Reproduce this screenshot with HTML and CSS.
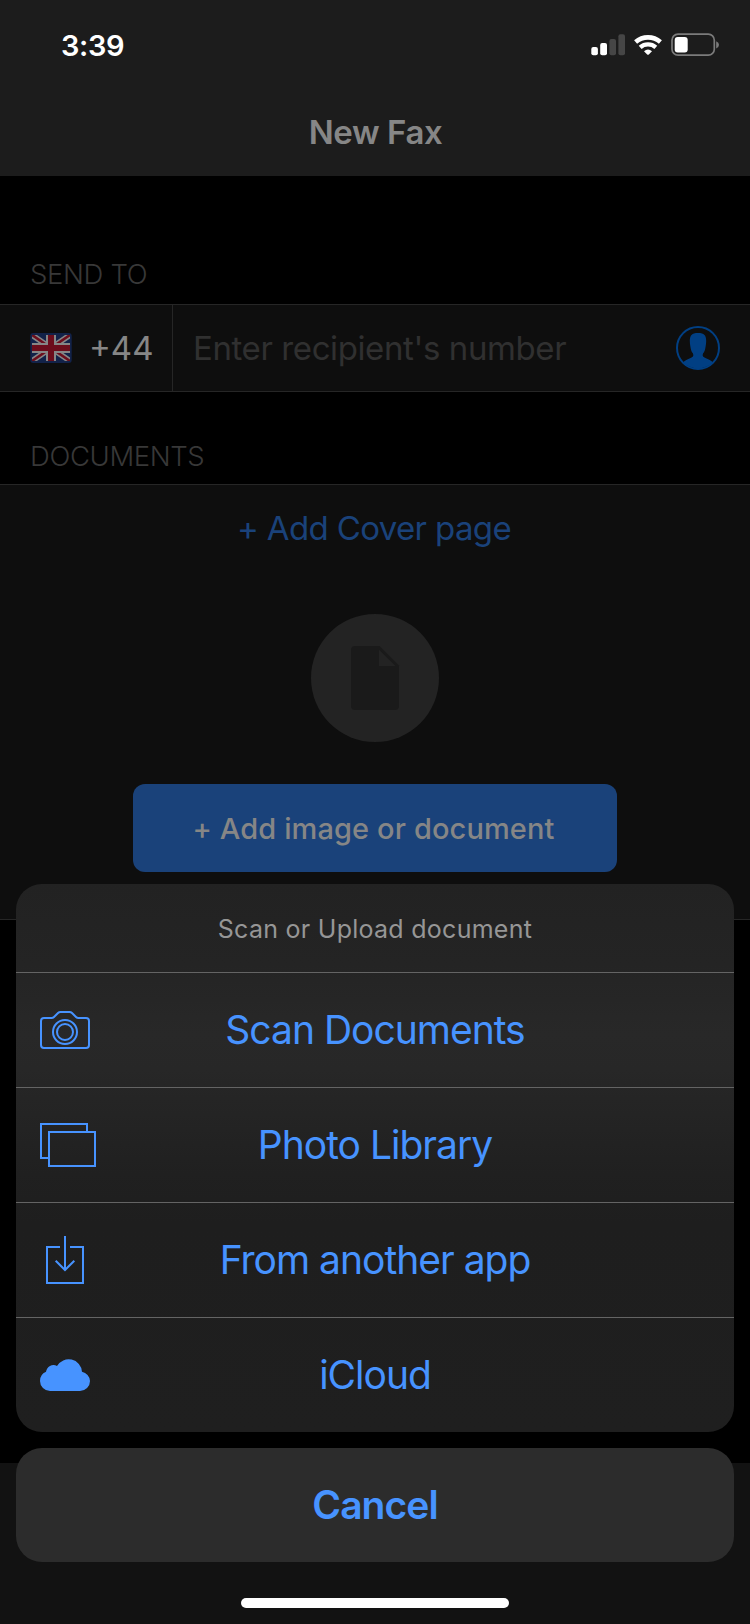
FILE: index.html
```html
<!DOCTYPE html>
<html lang="en">
<head>
<meta charset="utf-8">
<title>New Fax</title>
<link rel="stylesheet" href="styles.css">
</head>
<body>
<div class="screen">
  <header class="header">
    <div class="status">
      <span class="time">3:39</span>
      <svg class="status-icons" width="130" height="26" viewBox="590 32 130 26">
        <g fill="#fff">
          <rect x="591.3" y="47" width="6.6" height="8.3" rx="2"/>
          <rect x="600.2" y="43" width="6.8" height="12.3" rx="2"/>
        </g>
        <g fill="#464646">
          <rect x="609.4" y="39" width="6.6" height="16.3" rx="2"/>
          <rect x="618.4" y="34.2" width="6.6" height="21.1" rx="2"/>
        </g>
        <g fill="none" stroke="#fff">
          <path d="M635.6 42A19 19 0 0 1 660.4 42" stroke-width="4.6"/>
          <path d="M640.2 47.3A11.8 11.8 0 0 1 655.8 47.3" stroke-width="4.3"/>
        </g>
        <path d="M644 51.3A6.2 6.2 0 0 1 652 51.3L648.8 54.5Q648 55.2 647.2 54.5Z" fill="#fff"/>
        <rect x="672" y="34.2" width="42.3" height="21" rx="6" fill="none" stroke="#7b7b7b" stroke-width="1.7"/>
        <rect x="674.7" y="37" width="13" height="15.6" rx="3" fill="#fff"/>
        <path d="M716.2 41.2Q719 42.2 719 44.8T716.2 48.4Z" fill="#7b7b7b"/>
      </svg>
    </div>
    <h1 class="title">New Fax</h1>
  </header>

  <main class="content">
    <h2 class="label send">SEND TO</h2>
    <div class="recipient">
      <div class="country">
        <svg class="flag" width="42" height="30" viewBox="0 0 42 30">
          <rect x=".3" width="41.4" height="30" rx="3" fill="#122249"/>
          <svg x="2" y="2" width="38" height="26" viewBox="0 0 38 26">
            <path d="M0 0L38 26M38 0L0 26" stroke="#868686" stroke-width="5.6"/>
            <path d="M0 0L38 26M38 0L0 26" stroke="#6c0d1c" stroke-width="2.6"/>
            <path d="M19 0V26M0 13H38" stroke="#868686" stroke-width="10"/>
            <path d="M19 0V26M0 13H38" stroke="#6c0d1c" stroke-width="6"/>
          </svg>
        </svg>
        <span class="code">+44</span>
      </div>
      <span class="placeholder">Enter recipient's number</span>
      <svg class="contact" width="44" height="44" viewBox="0 0 44 44">
        <circle cx="22" cy="22" r="21" fill="none" stroke="#013f83" stroke-width="2"/>
        <path d="M7 36.2C9.500 34 13 33 15.500 31.500C17.500 30.500 17.500 29.500 17 27.500C15.200 25.500 14.800 23 14.300 20C13.600 16 13.500 12 15 9.500C16.500 7.500 19 7 22 7S27.500 7.500 29 9.500C30.500 12 30.400 16 29.700 20C29.200 23 28.800 25.500 27 27.500C26.500 29.500 26.500 30.500 28.500 31.500C31 33 34.500 34 37 36.200A21 21 0 0 1 7 36.200Z" fill="#013f83"/>
      </svg>
    </div>
    <h2 class="label docs">DOCUMENTS</h2>
    <section class="documents">
      <a class="cover">+ Add Cover page</a>
      <svg class="empty" width="128" height="128" viewBox="0 0 128 128">
        <circle cx="64" cy="64" r="64" fill="#232323"/>
        <path d="M44 32H68.500L88 51.500V92Q88 96 84 96H44Q40 96 40 92V36Q40 32 44 32Z" fill="#1a1a1a"/>
        <path d="M68 35.800V52H84.500Z" fill="#232323"/>
      </svg>
      <button class="add">+ Add image or document</button>
    </section>
  </main>
  <div class="tabbar"></div>

  <div class="overlay">
    <div class="sheet">
      <div class="sheet-title">Scan or Upload document</div>
      <div class="action">
        <svg width="56" height="48" viewBox="0 0 56 48" fill="none" stroke="#4793ff" stroke-width="2">
          <path d="M4 12H11.500Q13 12 14 11L18 7Q19 6 20.500 6H29.500Q31 6 32 7L36 11Q37 12 38.500 12H46Q49 12 49 15V39Q49 42 46 42H4Q1 42 1 39V15Q1 12 4 12Z"/>
          <circle cx="25" cy="26" r="12"/><circle cx="25" cy="26" r="8"/>
        </svg>
        <span>Scan Documents</span>
      </div>
      <div class="action">
        <svg width="56" height="48" viewBox="0 0 56 48" fill="none" stroke="#4793ff" stroke-width="2">
          <path d="M8 37H1V3H47V11M9 11H55V45H9Z"/>
        </svg>
        <span>Photo Library</span>
      </div>
      <div class="action">
        <svg width="56" height="48" viewBox="0 0 56 48" fill="none" stroke="#4793ff" stroke-width="2">
          <path d="M20 11H7V47H43V11H30M25 0V34M15.700 24.700L25 34L34.300 24.700"/>
        </svg>
        <span>From another app</span>
      </div>
      <div class="action">
        <svg width="56" height="48" viewBox="0 0 56 48">
          <path d="M10 40A10 10 0 0 1 0 30A10 10 0 0 1 6 20.800A7.500 7.500 0 0 1 17 15A13.400 13.400 0 0 1 42 20.800A10 10 0 0 1 50 30A10 10 0 0 1 40 40Z" fill="#4793ff"/>
        </svg>
        <span>iCloud</span>
      </div>
    </div>
    <div class="cancel">Cancel</div>
    <div class="home"></div>
  </div>
</div>
</body>
</html>
```
FILE: styles.css
```css
* { box-sizing: border-box; margin: 0; padding: 0; }
body { background: #000; font-family: Inter, "Liberation Sans", sans-serif; }
.screen { position: relative; display: flex; flex-direction: column; width: 750px; height: 1624px; overflow: hidden; background: #000; }
.header { height: 176px; background: #1c1c1c; }
.status { display: flex; justify-content: space-between; align-items: center; height: 90px; padding: 0 30px 0 61px; }
.time { color: #fff; font-size: 29px; font-weight: 600; letter-spacing: -.38px; }
.status-icons { display: block; }
.title { display: flex; justify-content: center; align-items: center; height: 84px; padding-left: 1px; color: #868686; font-size: 33px; font-weight: 600; letter-spacing: -.42px; }
.content { flex: 1; display: flex; flex-direction: column; }
.label { color: #383838; font-size: 27.5px; font-weight: 300; line-height: 34px; padding-left: 30px; }
.send { padding-top: 81px; height: 128px; letter-spacing: -.35px; }
.recipient { display: flex; align-items: center; height: 88px; border: solid #262626; border-width: 1px 0; background: #0e0e0e; padding-right: 30px; }
.country { display: flex; align-items: center; width: 173px; height: 86px; border-right: 1px solid #262626; padding-left: 30px; gap: 17px; }
.flag { flex: none; }
.code { color: #868686; font-size: 33px; }
.placeholder { flex: 1; padding-left: 20px; color: #303030; font-size: 33px; letter-spacing: -.4px; }
.docs { padding-top: 47px; height: 92px; letter-spacing: -.38px; }
.documents { display: flex; flex-direction: column; align-items: center; height: 436px; border: solid #262626; border-width: 1px 0; background: #0e0e0e; }
.cover { display: flex; align-items: center; height: 87px; padding: 0 2px 2px 0; color: #1a427a; font-size: 33px; letter-spacing: -.63px; }
.empty { display: block; margin: 42px 0; }
.add { width: 484px; height: 88px; border: 0; border-radius: 12px; background: #1a427a; color: #868686; font: 500 29px Inter, sans-serif; letter-spacing: .11px; padding-right: 3px; }
.tabbar { height: 161px; background: #121212; }
.overlay { position: absolute; inset: 0; padding: 884px 16px 16px; display: flex; flex-direction: column; }
.sheet { height: 548px; border-radius: 26px; overflow: hidden; background: linear-gradient(#222 0, #242424 80px, #282828 150px, #272727 185px, #202020 290px, #1e1e1e 340px, #1f1f1f 100%); }
.sheet-title { display: flex; justify-content: center; align-items: center; height: 88px; padding-top: 2px; color: #969696; font-size: 25px; letter-spacing: .27px; }
.action { display: grid; grid-template-columns: 56px 1fr 56px; align-items: center; height: 115px; border-top: 1px solid #646464; padding: 0 24px; color: #4793ff; font-size: 39px; letter-spacing: -1px; }
.action span { justify-self: center; white-space: nowrap; padding-bottom: 1px; }
.cancel { display: flex; justify-content: center; align-items: center; height: 114px; margin-top: 16px; padding-bottom: 2px; border-radius: 26px; background: #2c2c2c; color: #4793ff; font-size: 39px; font-weight: 600; letter-spacing: -.95px; }
.home { width: 268px; height: 10px; margin: 36px auto 0; border-radius: 5px; background: #fff; }
```
